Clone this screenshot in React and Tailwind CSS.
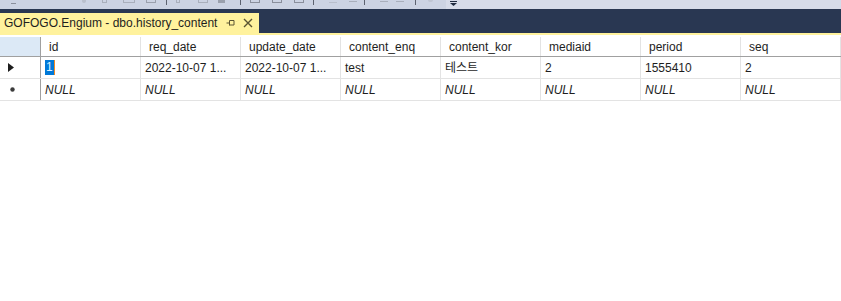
import React from "react";

const cols = ["id", "req_date", "update_date", "content_enq", "content_kor", "mediaid", "period", "seq"];
const row = ["1", "2022-10-07 1...", "2022-10-07 1...", "test", "테스트", "2", "1555410", "2"];

function Cell({ children, className = "" }) {
  return (
    <div className={`w-[100px] shrink-0 border-r border-[#e3e3e3] pl-[4px] flex items-center whitespace-nowrap overflow-hidden ${className}`}>
      {children}
    </div>
  );
}

function Sep() {
  return <div className="w-[1px] h-[5px] bg-[#5d6270] shrink-0"></div>;
}

export default function App() {
  return (
    <div
      className="w-[841px] h-[301px] bg-white overflow-hidden text-[12px] text-[#1e1e1e]"
      style={{ fontFamily: '"Liberation Sans", "Noto Sans CJK KR", sans-serif' }}
    >
      {/* toolbar strip (cut off at top) */}
      <div className="h-[9px] bg-[#d6dbe9] flex">
        <div className="w-[446px] bg-[#ccd3e3] flex items-start">
          <div className="ml-[11px] mt-[3px] w-[5px] h-[1px] bg-[#8a8f9c]"></div>
          <div className="ml-[66px] w-[4px] h-[3px] rounded-b-full bg-[#b9bfcc]"></div>
          <div className="ml-[16px] w-[5px] h-[3px] border-b border-x border-[#a9afbc]"></div>
          <div className="ml-[16px] w-[12px] h-[3px] border-b border-x border-[#a9afbc]"></div>
          <div className="ml-[11px] w-[10px] h-[3px] border-b border-x border-[#9aa0ad]"></div>
          <div className="ml-[10px]"><Sep /></div>
          <div className="ml-[9px] w-[4px] h-[3px] border-b border-x border-[#a9afbc]"></div>
          <div className="ml-[18px] w-[10px] h-[3px] border-b border-x border-[#a9afbc]"></div>
          <div className="ml-[10px] w-[7px] h-[3px] bg-[#9aa0ad]"></div>
          <div className="ml-[15px]"><Sep /></div>
          <div className="ml-[9px] w-[10px] h-[3px] border-b border-x border-[#8a8f9c]"></div>
          <div className="ml-[12px] w-[10px] h-[3px] border-b border-x border-[#8a8f9c]"></div>
          <div className="ml-[12px] w-[10px] h-[3px] border-b border-x border-[#8a8f9c]"></div>
          <div className="ml-[9px]"><Sep /></div>
          <div className="ml-[15px] mt-[2px] w-[8px] h-[1px] bg-[#b9bfcc]"></div>
          <div className="ml-[12px] mt-[1px] w-[8px] h-[1px] bg-[#a9afbc]"></div>
          <div className="ml-[7px]"><Sep /></div>
          <div className="ml-[15px] mt-[1px] w-[8px] h-[1px] bg-[#a9afbc]"></div>
          <div className="ml-[8px] mt-[1px] w-[8px] h-[1px] bg-[#a9afbc]"></div>
          <div className="ml-[11px]"><Sep /></div>
          <div className="ml-[12px] w-[5px] h-[2px] rounded-b-full bg-[#bfc5d2]"></div>
        </div>
        <div className="w-[14px] flex justify-center items-start pt-[1px]">
          <svg width="7" height="5" viewBox="0 0 7 5">
            <rect x="0" y="0" width="7" height="1" fill="#1e2a40" />
            <path d="M0 2 H7 L3.5 5 Z" fill="#1e2a40" />
          </svg>
        </div>
      </div>

      {/* document tab well */}
      <div className="h-[24px] bg-[#293752] flex items-end">
        <div className="h-[20px] w-[259px] bg-[#fff29d] flex items-center pl-[4px] text-[12px] text-[#1e1e1e] whitespace-nowrap">
          <span>GOFOGO.Engium - dbo.history_content</span>
          <svg className="ml-[9px] shrink-0" width="10" height="10" viewBox="0 0 10 10">
            <path d="M0.5 5 H3.5 M3.5 2.5 V7.5 M3.5 2.5 H8 V7 H3.5" stroke="#5a5432" strokeWidth="1" fill="none" />
          </svg>
          <svg className="ml-[7px] shrink-0" width="10" height="10" viewBox="0 0 10 10">
            <path d="M1 1 L9 9 M9 1 L1 9" stroke="#5a5432" strokeWidth="1.4" />
          </svg>
        </div>
      </div>
      <div className="h-[2px] bg-[#fff29d]"></div>

      {/* results grid */}
      <div className="mt-[2px]">
        <div className="flex h-[20px] border-b border-[#a0a0a0]">
          <div className="w-[41px] shrink-0 bg-[#dce9f6] border-r border-[#a0a0a0]"></div>
          {cols.map((c) => (
            <Cell key={c} className="pl-[8px]">{c}</Cell>
          ))}
        </div>
        <div className="flex h-[22px] border-b border-[#e3e3e3]">
          <div className="w-[41px] shrink-0 border-r border-[#a0a0a0] flex items-center pl-[8px]">
            <svg width="6" height="9" viewBox="0 0 6 9">
              <path d="M0 0 L6 4.5 L0 9 Z" fill="#1e1e1e" />
            </svg>
          </div>
          {row.map((v, i) => (
            <Cell key={i}>
              {i === 0 ? (
                <span className="flex items-center">
                  <span className="bg-[#0078d7] text-[#dff0ff] px-[1px] leading-[15px]">1</span>
                  <span className="w-[1px] h-[15px] bg-[#f08a24]"></span>
                </span>
              ) : (
                v
              )}
            </Cell>
          ))}
        </div>
        <div className="flex h-[22px] border-b border-[#e3e3e3]">
          <div className="w-[41px] shrink-0 border-r border-[#a0a0a0] flex items-center pl-[10px]">
            <svg width="5" height="5" viewBox="0 0 5 5">
              <circle cx="2.5" cy="2.5" r="2.2" fill="#3c3c3c" />
            </svg>
          </div>
          {cols.map((c) => (
            <Cell key={c} className="italic">NULL</Cell>
          ))}
        </div>
      </div>
    </div>
  );
}
